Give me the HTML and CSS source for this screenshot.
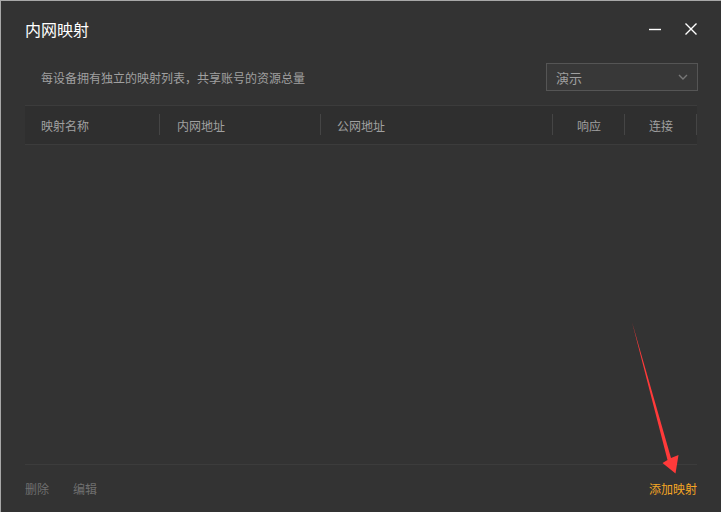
FILE: index.html
```html
<html lang="zh-CN">

<head>
    <title>内网映射</title>
    <meta name="viewport" content="width=device-width, initial-scale=1">
    <link rel="stylesheet" href="styles.css">
</head>

<body>
    <div class="window">
        <header class="titlebar">
            <h1 class="title">内网映射</h1>
            <div class="win-btns">
                <button type="button" class="win-btn" title="最小化">
                    <svg width="14" height="14" viewBox="0 0 14 14"><path d="M1 7.5h12" stroke="#fff" stroke-width="1.4"/></svg>
                </button>
                <button type="button" class="win-btn" title="关闭">
                    <svg width="14" height="14" viewBox="0 0 14 14"><path d="M1.5 1.5l11 11M12.5 1.5l-11 11" stroke="#fff" stroke-width="1.4"/></svg>
                </button>
            </div>
        </header>

        <div class="toolbar">
            <p class="hint">每设备拥有独立的映射列表，共享账号的资源总量</p>
            <div class="select">
                <span>演示</span>
                <svg width="10" height="6" viewBox="0 0 10 6"><path d="M1 1l4 4 4-4" fill="none" stroke="#777" stroke-width="1.4"/></svg>
            </div>
        </div>

        <div class="table">
            <div class="thead">
                <div class="th">映射名称</div>
                <div class="th">内网地址</div>
                <div class="th">公网地址</div>
                <div class="th center">响应</div>
                <div class="th center">连接</div>
            </div>
            <div class="tbody"></div>
        </div>

        <footer class="footer">
            <div class="actions">
                <a href="#" class="link muted">删除</a>
                <a href="#" class="link muted">编辑</a>
            </div>
            <a href="#" class="link add">添加映射</a>
        </footer>

        <!-- red annotation arrow -->
        <svg class="arrow" width="721" height="512" viewBox="0 0 721 512">
            <polygon points="632,322 671,458 678.5,455 675.5,473.5 662.5,463 667.5,460" fill="#ff3a3a"/>
        </svg>
    </div>
</body>

</html>
```

FILE: styles.css
```css
html, body {
    margin: 0;
    padding: 0;
    background: #333333;
}

body {
    font-family: "Noto Sans CJK SC", "Noto Sans", sans-serif;
    font-size: 12px;
    color: #a0a0a0;
}

.window {
    position: relative;
    width: 721px;
    height: 512px;
    box-sizing: border-box;
    border-top: 1px solid #a8a8a8;
    border-left: 1px solid #a8a8a8;
    background: #333333;
    display: flex;
    flex-direction: column;
    padding: 0 24px;
}

.titlebar {
    height: 55px;
    display: flex;
    align-items: center;
    justify-content: space-between;
}

.title {
    margin: 0;
    font-size: 16px;
    font-weight: normal;
    color: #ffffff;
}

.win-btns {
    display: flex;
    gap: 22px;
    margin-right: -1px;
}

.win-btn {
    width: 14px;
    height: 14px;
    padding: 0;
    border: none;
    background: none;
    display: flex;
    cursor: pointer;
}

.toolbar {
    margin-top: 7px;
    height: 28px;
    display: flex;
    align-items: center;
    justify-content: space-between;
    margin-bottom: 14px;
}

.hint {
    margin: 0;
    padding-left: 16px;
    color: #a0a0a0;
}

.select {
    width: 141px;
    height: 26px;
    border: 1px solid #555555;
    background: #383838;
    display: flex;
    align-items: center;
    justify-content: space-between;
    padding: 0 0 0 9px;
    margin-right: -1px;
    color: #a0a0a0;
    font-size: 13px;
}

.select svg {
    margin-right: 9px;
}

.table {
    flex: 1;
    display: flex;
    flex-direction: column;
}

.thead {
    display: grid;
    grid-template-columns: 136px 160px 232px 72px 72px;
    height: 38px;
    border-top: 1px solid #3c3c3c;
    border-bottom: 1px solid #3c3c3c;
    background: #2f2f2f;
}

.th {
    position: relative;
    display: flex;
    align-items: center;
    padding-left: 16px;
}

.th.center {
    justify-content: center;
    padding-left: 0;
}

.th::after {
    content: "";
    position: absolute;
    right: 0;
    top: 8px;
    height: 21px;
    width: 1px;
    background: #454545;
}

.th:first-child::after {
    right: 1px;
}

.tbody {
    flex: 1;
}

.footer {
    height: 47px;
    border-top: 1px solid #3c3c3c;
    display: flex;
    align-items: center;
    justify-content: space-between;
}

.actions {
    display: flex;
    gap: 24px;
}

.link {
    text-decoration: none;
}

.link.muted {
    color: #707070;
}

.link.add {
    color: #f5a623;
}

.arrow {
    position: absolute;
    left: -1px;
    top: -1px;
    pointer-events: none;
}
```
